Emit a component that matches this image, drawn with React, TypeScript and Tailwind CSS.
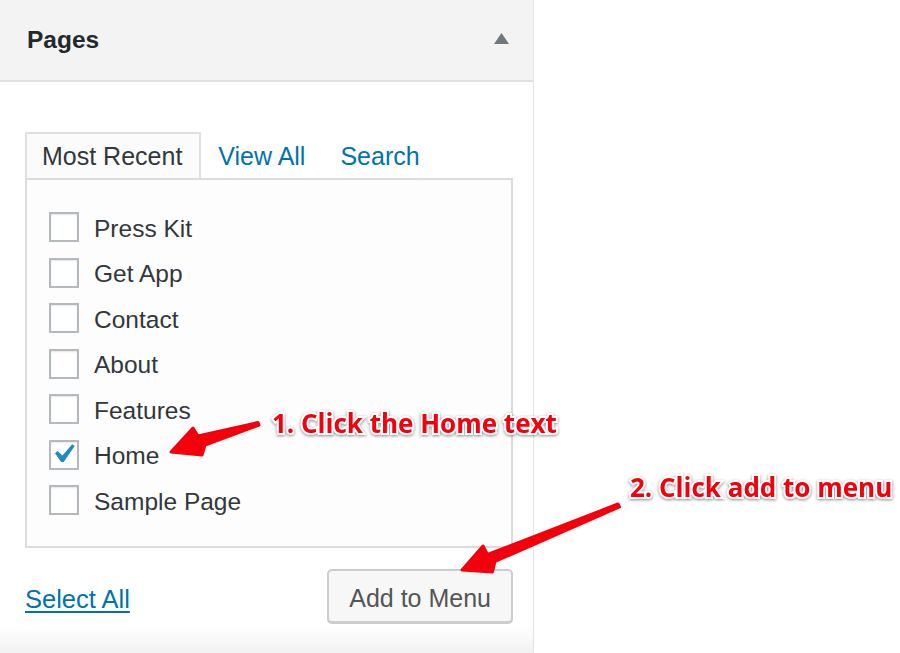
import React from "react";

const pages = [
  { title: "Press Kit", checked: false },
  { title: "Get App", checked: false },
  { title: "Contact", checked: false },
  { title: "About", checked: false },
  { title: "Features", checked: false },
  { title: "Home", checked: true },
  { title: "Sample Page", checked: false },
];

const Checkbox = ({ checked }: { checked: boolean }) => (
  <span className="relative w-[30px] h-[30px] shrink-0 border-2 border-[#b4b9be] bg-white shadow-[inset_0_1px_2px_rgba(0,0,0,0.1)]">
    {checked && (
      <svg
        className="absolute left-[-7px] top-[-6.5px]"
        width="38"
        height="38"
        viewBox="0 0 20 20"
      >
        <path
          d="M14.83 4.89l1.34.94-5.81 8.38H9.02L5.78 9.67l1.34-1.25 2.57 2.4z"
          fill="#1e8cbe"
        />
      </svg>
    )}
  </span>
);

const Callout = ({ text, className }: { text: string; className: string }) => (
  <div
    className={
      "absolute whitespace-nowrap font-['Open_Sans','Noto_Sans',sans-serif] font-bold text-[26px] leading-[26px] text-[#f4000c] [paint-order:stroke_fill] [-webkit-text-stroke:4px_#ffffff] drop-shadow-[0_1px_1.5px_rgba(0,0,0,0.45)] " +
      className
    }
  >
    {text}
  </div>
);

export default function App() {
  return (
    <div className="relative w-[900px] h-[653px] overflow-hidden bg-white font-['Liberation_Sans',Arial,sans-serif]">
      <div className="w-[534px] h-full flex flex-col border-r border-[#e5e5e5]">
        {/* header */}
        <div className="h-[82px] shrink-0 flex items-center justify-between pl-[27px] pr-[24px] bg-[#f3f3f3] border-b-2 border-[#e1e1e1]">
          <h2 className="text-[24.5px] font-bold text-[#23282d] leading-[30px]">Pages</h2>
          <svg width="15" height="11" viewBox="0 0 15 11" className="mb-[3px]">
            <polygon points="0,11 7.5,0 15,11" fill="#72777c" />
          </svg>
        </div>

        {/* body */}
        <div className="pl-[25px] pr-[20px] pt-[50px]">
          <div className="flex h-[46px] text-[25px] leading-[28px]">
            <div className="flex items-center pl-[15px] pr-[17px] border-2 border-b-0 border-[#dfdfdf] bg-[#fbfbfb] text-[#32373c]">
              Most Recent
            </div>
            <a className="flex items-center pt-[2px] pl-[17px] pr-[18px] text-[#0073aa]">View All</a>
            <a className="flex items-center pt-[2px] px-[17px] text-[#0073aa]">Search</a>
          </div>

          <div className="flex flex-col gap-[15.5px] pt-[32px] pb-[31px] pl-[22px] border-2 border-[#dcdcdc] bg-[#fdfdfd]">
            {pages.map((p) => (
              <label key={p.title} className="flex items-center gap-[15px] h-[30px]">
                <Checkbox checked={p.checked} />
                <span className="pt-[3px] text-[24.5px] leading-[30px] text-[#32373c]">{p.title}</span>
              </label>
            ))}
          </div>

          <div className="flex items-center justify-between mt-[21px]">
            <a className="pt-[6px] text-[25.5px] leading-[28px] text-[#0073aa] underline underline-offset-[3px] decoration-[1.5px]">
              Select All
            </a>
            <button className="h-[54px] pt-[3px] px-[20px] rounded-[5px] border-2 border-[#cccccc] bg-[#f7f7f7] shadow-[0_1px_0_#cccccc] text-[25px] leading-[28px] text-[#555555]">
              Add to Menu
            </button>
          </div>
        </div>

        <div className="flex-1 mt-[3px] bg-linear-to-b from-white to-[#f1f1f1]" />
      </div>

      {/* annotations */}
      <svg className="absolute left-0 top-0 pointer-events-none" width="900" height="653">
        <polygon
          points="171,452 193,428 198,436 258,422.5 259,425 205,445 202,455"
          fill="#f4000c"
          stroke="#f4000c"
          strokeWidth="3"
          strokeLinejoin="round"
        />
        <polygon
          points="462,570 483,546 487.5,554.5 618,504 619.5,507 495,561.5 492.5,572"
          fill="#f4000c"
          stroke="#f4000c"
          strokeWidth="3"
          strokeLinejoin="round"
        />
      </svg>
      <Callout text="1. Click the Home text" className="left-[272px] top-[410px]" />
      <Callout text="2. Click add to menu" className="left-[630px] top-[474px]" />
    </div>
  );
}
